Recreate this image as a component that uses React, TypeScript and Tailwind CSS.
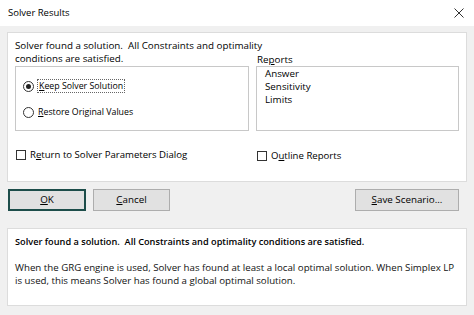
import React from "react";

const U = ({ children }: { children: React.ReactNode }) => <span className="underline underline-offset-[1px]">{children}</span>;

export default function App() {
  return (
    <div
      className="w-[474px] h-[315px] bg-[#f0f0f0] text-[#000] relative overflow-hidden"
      style={{ fontFamily: '"Open Sans", "Noto Sans", sans-serif' }}
    >
      <div className="h-[26px] bg-white flex items-center justify-between pl-[8px] pr-[10px]">
        <span className="text-[9.5px]">Solver Results</span>
        <svg width="10" height="10" viewBox="0 0 10 10">
          <path d="M0.5 0.5 L9.5 9.5 M9.5 0.5 L0.5 9.5" stroke="#333" strokeWidth="1" />
        </svg>
      </div>
      <div className="px-[7px] pt-[6px]">
        <div className="h-[150px] bg-white border border-[#dcdcdc] px-[7px] pt-[6px]">
          <div className="text-[9.8px] leading-[13px] whitespace-nowrap">
            Solver found a solution.&nbsp; All Constraints and optimality
            <br />
            conditions are satisfied.
          </div>
          <div className="flex gap-[7px] mt-[1px]">
            <div className="w-[235px] h-[65px] border border-[#c8c8c8] flex flex-col pl-[7px] pt-[13px] gap-[14px] text-[8.8px]">
              <div className="flex items-center gap-[3px] h-[12px]">
                <span className="w-[11px] h-[11px] rounded-full border border-[#333] flex items-center justify-center">
                  <span className="w-[5px] h-[5px] rounded-full bg-[#222]" />
                </span>
                <span className="border border-dotted border-[#666] px-[1px] leading-[12px]"><U>K</U>eep Solver Solution</span>
              </div>
              <div className="flex items-center gap-[4px] h-[12px]">
                <span className="w-[11px] h-[11px] rounded-full border border-[#333]" />
                <span className="leading-[12px]"><U>R</U>estore Original Values</span>
              </div>
            </div>
            <div className="flex flex-col -mt-[13px]">
              <div className="text-[9.8px] leading-[13px] pl-[1px]">Re<U>p</U>orts</div>
              <div className="w-[203px] h-[65px] border border-[#c8c8c8] pl-[8px] pt-[0px] text-[9.8px] leading-[13px]">
                <div>Answer</div>
                <div>Sensitivity</div>
                <div>Limits</div>
              </div>
            </div>
          </div>
          <div className="flex mt-[16px] text-[9.6px] leading-[13px]">
            <div className="w-[242px] flex items-center gap-[4px] pl-[1px]">
              <span className="w-[10px] h-[10px] border border-[#333] bg-white" />
              <span>R<U>e</U>turn to Solver Parameters Dialog</span>
            </div>
            <div className="flex items-center gap-[4px] mt-[2px]">
              <span className="w-[10px] h-[10px] border border-[#333] bg-white" />
              <span>O<U>u</U>tline Reports</span>
            </div>
          </div>
        </div>
        <div className="flex mt-[7px] h-[22px] text-[9.8px]">
          <div className="w-[78px] border-2 border-[#1d4d4a] bg-[#e1e1e1] flex items-center justify-center ml-[1px]">
            <span><U>O</U>K</span>
          </div>
          <div className="w-[77px] ml-[7px] border border-[#adadad] bg-[#e1e1e1] flex items-center justify-center">
            <span><U>C</U>ancel</span>
          </div>
          <div className="w-[104px] ml-auto mr-[8px] border border-[#adadad] bg-[#e1e1e1] flex items-center justify-center">
            <span><U>S</U>ave Scenario...</span>
          </div>
        </div>
        <div className="mt-[17px] h-[78px] bg-white border border-[#dcdcdc] px-[7px] pt-[6px] whitespace-nowrap">
          <div className="font-semibold leading-[13px] text-[9.2px]">Solver found a solution.&nbsp; All Constraints and optimality conditions are satisfied.</div>
          <div className="mt-[13px] leading-[13px] text-[9.7px] text-[#111]">
            When the GRG engine is used, Solver has found at least a local optimal solution. When Simplex LP
            <br />
            is used, this means Solver has found a global optimal solution.
          </div>
        </div>
      </div>
    </div>
  );
}
